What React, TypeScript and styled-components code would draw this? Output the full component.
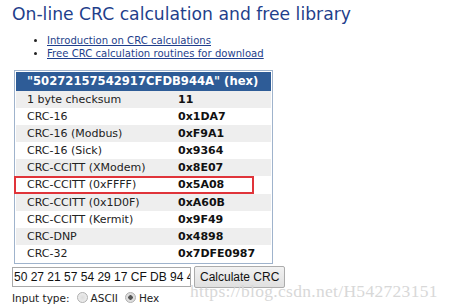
import React from "react";
import styled, { createGlobalStyle } from "styled-components";

const Global = createGlobalStyle`
  html, body { margin: 0; padding: 0; background: #fff; }
  body { font-family: "DejaVu Sans", Verdana, sans-serif; }
`;

const Page = styled.div`
  position: relative;
  width: 474px;
  height: 307px;
  overflow: hidden;
  padding: 2px 0 0 12px;
  box-sizing: border-box;
`;

const Title = styled.h1`
  margin: 0;
  font-size: 17.2px;
  line-height: 24px;
  font-weight: normal;
  color: #1f3f8c;
`;

const Links = styled.ul`
  margin: 8px 0 0 0;
  padding-left: 35px;
  font-size: 10.1px;
  line-height: 13px;
  list-style: disc;
`;

const LinkItem = styled.li`
  color: #222;
`;

const Link = styled.a`
  color: #1f3f8c;
  text-decoration: underline;
`;

const Table = styled.div`
  margin: 10px 0 0 2px;
  width: 259px;
  border: 1px solid #9fb3cc;
  padding: 1px;
  box-sizing: border-box;
  display: flex;
  flex-direction: column;
`;

const Header = styled.div`
  background: #2e5c97;
  color: #fff;
  font-weight: bold;
  font-size: 11.6px;
  height: 19px;
  line-height: 19px;
  padding-left: 11px;
  white-space: nowrap;
  overflow: hidden;
`;

const Row = styled.div<{ $alt: boolean }>`
  position: relative;
  display: grid;
  grid-template-columns: 151px 1fr;
  height: 17.1px;
  line-height: 17px;
  font-size: 11px;
  padding-left: 11px;
  color: #222;
  background: ${(p) => (p.$alt ? "#eeeeee" : "#ffffff")};
`;

const Value = styled.span`
  font-weight: bold;
  color: #111;
`;

const Mark = styled.div`
  position: absolute;
  left: -2px;
  top: 0;
  width: 236px;
  height: 14px;
  border: 2px solid #e0343a;
  pointer-events: none;
`;

const Form = styled.div`
  display: flex;
  align-items: center;
  gap: 3px;
  margin-top: 2px;
`;

const Input = styled.div`
  width: 176px;
  height: 18px;
  border: 1px solid #a9a9a9;
  font-family: "Liberation Sans", Arial, sans-serif;
  font-size: 12px;
  line-height: 18px;
  padding-left: 1px;
  white-space: nowrap;
  overflow: hidden;
  color: #111;
`;

const Button = styled.div`
  height: 20px;
  padding: 0 5px;
  border: 1px solid #acacac;
  border-radius: 2px;
  background: linear-gradient(#f2f2f2, #e0e0e0);
  font-family: "Liberation Sans", Arial, sans-serif;
  font-size: 12px;
  line-height: 20px;
  color: #111;
`;

const TypeRow = styled.div`
  display: flex;
  align-items: center;
  font-size: 10.5px;
  margin-top: 2px;
  color: #222;
  height: 16px;
`;

const Radio = styled.span<{ $on?: boolean }>`
  width: 9px;
  height: 9px;
  border-radius: 50%;
  border: 1px solid #b0b0b0;
  background: radial-gradient(circle, ${(p) => (p.$on ? "#555 0 2px, #ddd 2.5px" : "#ddd 0, #f2f2f2")});
  margin: 0 3px 0 7px;
  display: inline-block;
`;

const Watermark = styled.div`
  position: absolute;
  left: 190px;
  top: 281px;
  font-family: "Liberation Serif", "Times New Roman", serif;
  font-size: 17.5px;
  color: #d8d8d8;
  letter-spacing: 0.3px;
  pointer-events: none;
`;

const rows: [string, string][] = [
  ["1 byte checksum", "11"],
  ["CRC-16", "0x1DA7"],
  ["CRC-16 (Modbus)", "0xF9A1"],
  ["CRC-16 (Sick)", "0x9364"],
  ["CRC-CCITT (XModem)", "0x8E07"],
  ["CRC-CCITT (0xFFFF)", "0x5A08"],
  ["CRC-CCITT (0x1D0F)", "0xA60B"],
  ["CRC-CCITT (Kermit)", "0x9F49"],
  ["CRC-DNP", "0x4898"],
  ["CRC-32", "0x7DFE0987"],
];

export default function App() {
  return (
    <>
      <Global />
      <Page>
        <Title>On-line CRC calculation and free library</Title>
        <Links>
          <LinkItem>
            <Link>Introduction on CRC calculations</Link>
          </LinkItem>
          <LinkItem>
            <Link>Free CRC calculation routines for download</Link>
          </LinkItem>
        </Links>
        <Table>
          <Header>"50272157542917CFDB944A" (hex)</Header>
          {rows.map(([k, v], i) => (
            <Row key={k} $alt={i % 2 === 0}>
              {i === 5 && <Mark />}
              <span>{k}</span>
              <Value>{v}</Value>
            </Row>
          ))}
        </Table>
        <Form>
          <Input>50 27 21 57 54 29 17 CF DB 94 4A</Input>
          <Button>Calculate CRC</Button>
        </Form>
        <TypeRow>
          Input type:
          <Radio />
          ASCII
          <Radio $on />
          Hex
        </TypeRow>
        <Watermark>https://blog.csdn.net/H542723151</Watermark>
      </Page>
    </>
  );
}
